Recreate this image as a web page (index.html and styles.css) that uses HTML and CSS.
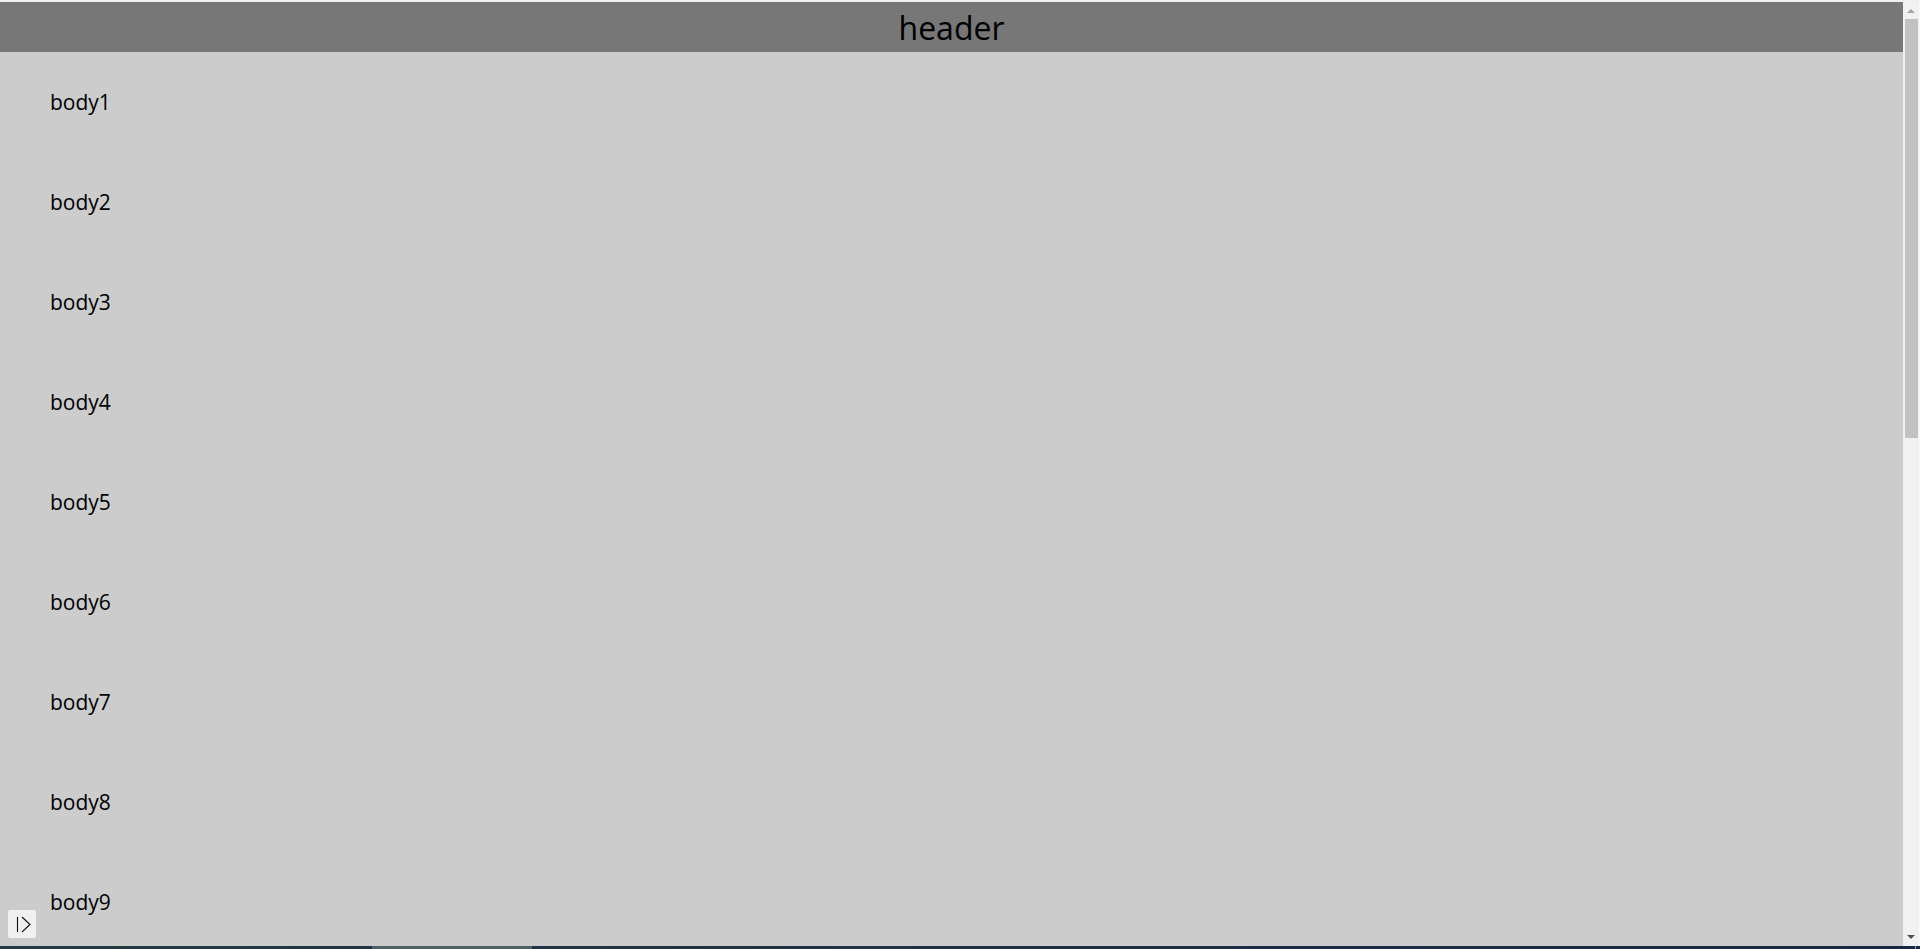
FILE: index.html
```html
<!DOCTYPE html>
<html lang="en">
<head>
	<meta charset="UTF-8">
	<title>header</title>
	<link rel="stylesheet" href="styles.css">
</head>
<body>
<div class="window">
	<div class="page">
		<div class="header">header</div>
		<div class="content">
			<div class="row">body1</div>
			<div class="row">body2</div>
			<div class="row">body3</div>
			<div class="row">body4</div>
			<div class="row">body5</div>
			<div class="row">body6</div>
			<div class="row">body7</div>
			<div class="row">body8</div>
			<div class="row">body9</div>
		</div>
		<button class="toggle">
			<svg width="28" height="28" viewBox="0 0 28 28"><path d="M9.5 7V22M14 7L22 14.5L14 22" fill="none" stroke="#111" stroke-width="1.1"/></svg>
		</button>
	</div>
	<div class="scrollbar">
		<div class="arrow-up"></div>
		<div class="thumb"></div>
		<div class="track"></div>
		<div class="arrow-down"></div>
	</div>
</div>
<div class="strip"><div class="strip-light"></div><div class="strip-mark"></div></div>
</body>
</html>
```

FILE: styles.css
```css
html, body { margin:0; height:100%; overflow:hidden; }
body { display:flex; flex-direction:column; background-color:#f0f0f0; font-family:"Open Sans", "Noto Sans", sans-serif; color:#000; padding-top:2px; box-sizing:border-box; }
.window { flex:1; display:flex; min-height:0; }
.page { flex:1; position:relative; overflow:hidden; background-color:#ccc; }
.header { height:50px; line-height:52px; background-color:#777; text-align:center; font-size:32px; }
.content { padding-left:50px; }
.row { height:100px; line-height:100px; font-size:21px; }
.toggle { position:absolute; left:8px; bottom:8px; width:28px; height:28px; padding:0; border:0; border-radius:2px; background-color:#f0f0f0; display:flex; }
.scrollbar { width:16px; border-right:1px solid #fafafa; display:flex; flex-direction:column; align-items:center; background-color:#f1f1f1; }
.arrow-up { margin-top:7px; border:4px solid transparent; border-top:0; border-bottom-color:#a3a3a3; width:0; height:0; }
.thumb { width:13px; height:419px; margin-top:6px; background-color:#c1c1c1; }
.track { flex:1; }
.arrow-down { margin-bottom:7px; border:4px solid transparent; border-bottom:0; border-top-color:#505050; width:0; height:0; }
.strip { height:3px; display:flex; background:linear-gradient(to right, #233a42, #1a2744); padding-left:372px; }
.strip-light { width:160px; background-color:#4f6064; }
.strip-mark { width:1px; margin-left:auto; margin-right:4px; background-color:#8a93a3; }
```
